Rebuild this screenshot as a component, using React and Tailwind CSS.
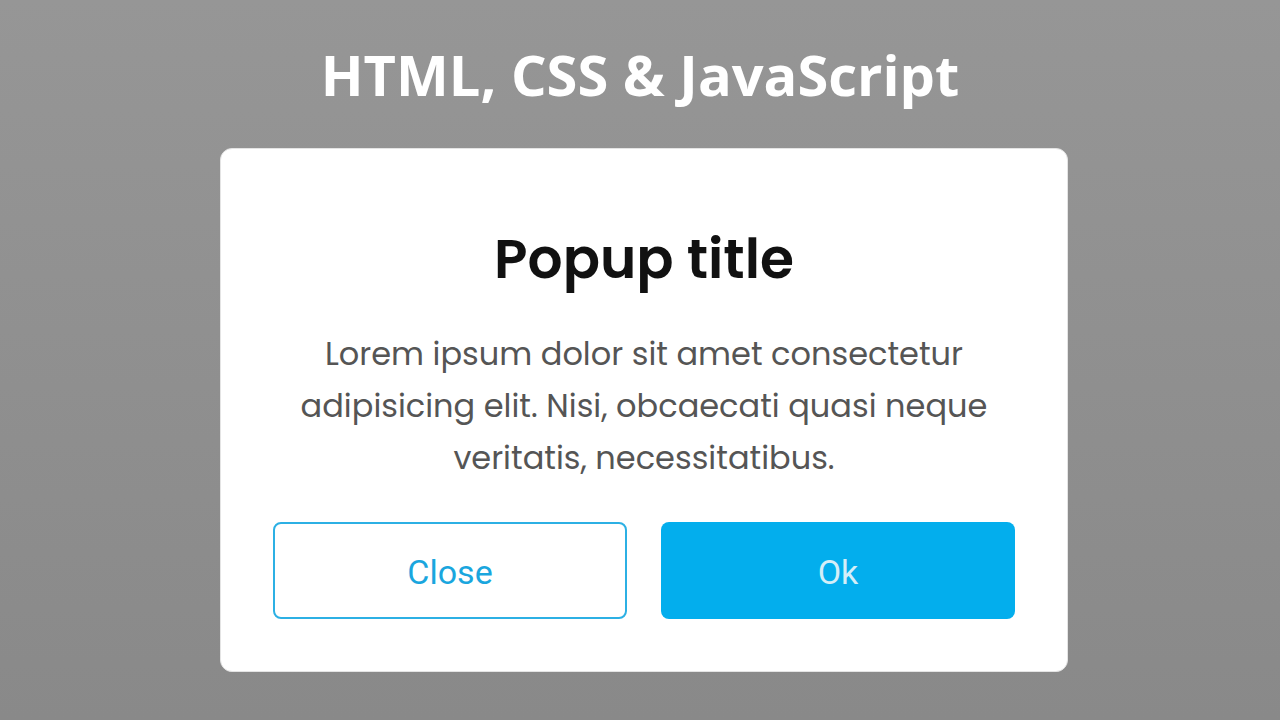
export default function App() {
  return (
    <div className="w-[1280px] h-[720px] overflow-hidden bg-gradient-to-b from-[#969696] to-[#898989] flex flex-col items-center">
      <h1 className="mt-[38px] h-[72px] flex items-center text-[56px] font-bold text-white leading-none font-['Open_Sans',sans-serif]">
        HTML, CSS &amp; JavaScript
      </h1>
      <div className="mt-[38px] ml-[8px] w-[848px] h-[524px] bg-white rounded-[12px] border border-[#e4e4e4] flex flex-col items-center px-[52px] pt-[82px]">
        <h2 className="text-[55px] font-semibold leading-none text-[#111] font-['Poppins','Lato','Noto_Sans',sans-serif]">
          Popup title
        </h2>
        <p className="mt-[42px] text-center text-[32px] leading-[52px] text-[#555] whitespace-nowrap font-['Poppins','Lato','Noto_Sans',sans-serif]">
          Lorem ipsum dolor sit amet consectetur
          <br />
          adipisicing elit. Nisi, obcaecati quasi neque
          <br />
          veritatis, necessitatibus.
        </p>
        <div className="mt-[38px] w-full flex gap-[34px]">
          <button className="w-[354px] h-[97px] pt-[4px] rounded-[8px] border-2 border-[#2cb0e4] text-[#1aa6de] text-[34px] font-['Roboto',sans-serif]">
            Close
          </button>
          <button className="w-[354px] h-[97px] pt-[4px] rounded-[8px] bg-[#03aeed] text-[#d4eef8] text-[34px] font-['Roboto',sans-serif]">
            Ok
          </button>
        </div>
      </div>
    </div>
  )
}
